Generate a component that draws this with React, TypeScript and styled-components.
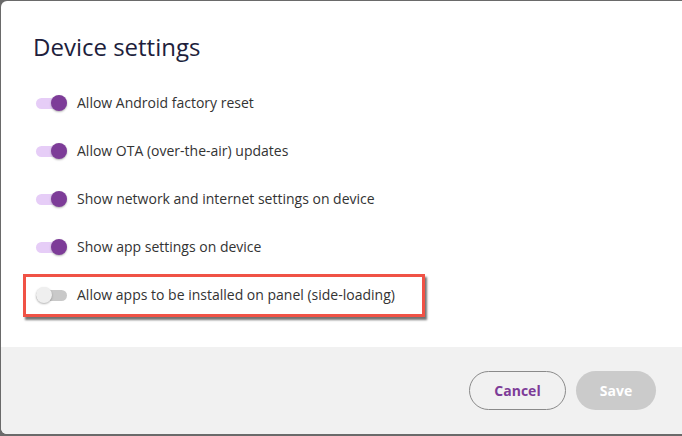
import React from "react";
import styled, { createGlobalStyle } from "styled-components";

const Global = createGlobalStyle`
  html, body { margin: 0; padding: 0; background: #6a6a6a; }
  body { width: 682px; height: 436px; overflow: hidden; font-family: "Open Sans", "Noto Sans", sans-serif; }
`;

const Dialog = styled.div`
  margin: 1px 0 0 1px;
  width: 700px;
  height: 433px;
  background: #ffffff;
  border-radius: 6px;
  overflow: hidden;
  display: flex;
  flex-direction: column;
`;

const Title = styled.h1`
  margin: 0;
  padding: 30px 0 0 32px;
  font-size: 24px;
  line-height: 32px;
  font-weight: 400;
  color: #201e3c;
`;

const List = styled.div`
  margin-top: 16px;
  padding-left: 35px;
  display: flex;
  flex-direction: column;
  flex: 1;
`;

const Row = styled.div`
  position: relative;
  height: 48px;
  display: flex;
  align-items: center;
  gap: 10px;
`;

const Track = styled.div<{ $on: boolean }>`
  position: relative;
  width: 31px;
  height: 11px;
  border-radius: 6px;
  background: ${(p) => (p.$on ? "#e6cdf7" : "#c9c9c9")};
  flex-shrink: 0;
`;

const Thumb = styled.div<{ $on: boolean }>`
  position: absolute;
  top: -3px;
  left: ${(p) => (p.$on ? "15px" : "0px")};
  width: 16px;
  height: 16px;
  border-radius: 50%;
  background: ${(p) => (p.$on ? "#7d3c98" : "#efefef")};
  box-shadow: 0 1px 2px rgba(0, 0, 0, 0.3);
`;

const Label = styled.span`
  font-size: 14px;
  color: #333333;
  line-height: 20px;
`;

const Highlight = styled.div`
  position: absolute;
  left: -13px;
  top: 3px;
  width: 396px;
  height: 37px;
  border: 3px solid #f05246;
  box-shadow: 2px 3px 2px rgba(0, 0, 0, 0.55);
  pointer-events: none;
`;

const Footer = styled.div`
  height: 87px;
  background: #f1f1f1;
  display: flex;
  align-items: center;
  padding-left: 468px;
  gap: 10px;
`;

const Button = styled.button<{ $primary?: boolean }>`
  height: 39px;
  border-radius: 20px;
  font-family: "Open Sans", "Noto Sans", sans-serif;
  font-size: 14px;
  font-weight: 700;
  padding: 0;
  cursor: pointer;
  border: ${(p) => (p.$primary ? "none" : "1px solid #8a8a8a")};
  background: ${(p) => (p.$primary ? "#cbcbcb" : "transparent")};
  color: ${(p) => (p.$primary ? "#ffffff" : "#7d3c98")};
  width: ${(p) => (p.$primary ? "80px" : "97px")};
`;

const settings = [
  { label: "Allow Android factory reset", on: true },
  { label: "Allow OTA (over-the-air) updates", on: true },
  { label: "Show network and internet settings on device", on: true },
  { label: "Show app settings on device", on: true },
  { label: "Allow apps to be installed on panel (side-loading)", on: false, highlight: true },
];

export default function App() {
  return (
    <>
      <Global />
      <Dialog>
        <Title>Device settings</Title>
        <List>
          {settings.map((s) => (
            <Row key={s.label}>
              <Track $on={s.on}>
                <Thumb $on={s.on} />
              </Track>
              <Label>{s.label}</Label>
              {s.highlight && <Highlight />}
            </Row>
          ))}
        </List>
        <Footer>
          <Button>Cancel</Button>
          <Button $primary>Save</Button>
        </Footer>
      </Dialog>
    </>
  );
}
